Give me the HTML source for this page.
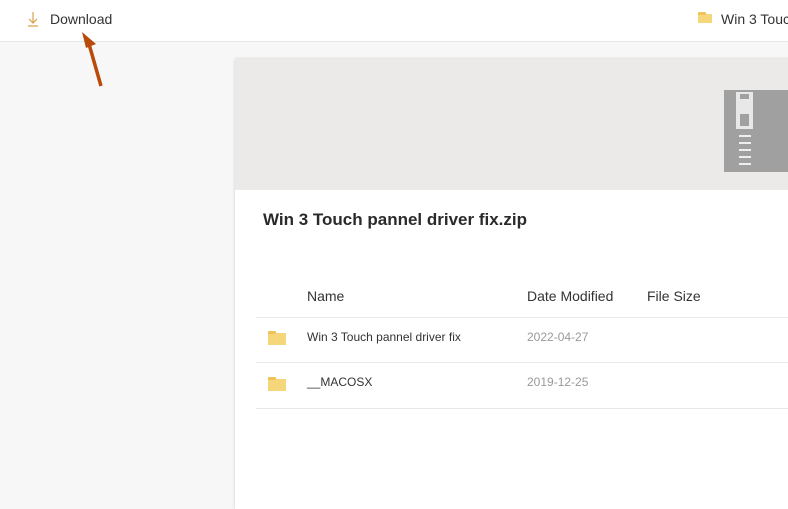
<!DOCTYPE html>
<html><head><style>
body{margin:0;width:788px;height:503px;overflow:hidden;background:#f8f7f7;font-family:"Liberation Sans",sans-serif;position:relative}
.top{position:absolute;left:0;top:0;width:788px;height:41px;background:#fff;border-bottom:1px solid #e6e6e6}
.card{position:absolute;left:235px;top:59px;width:560px;height:450px;background:#fff;box-shadow:0 0 3px rgba(0,0,0,.18)}
.hero{height:131px;background:#ebeae9}
.t{position:absolute;color:#333}
.row{position:absolute;left:21px;width:540px;border-top:1px solid #e8e8e8}
.fold{position:absolute;width:18px;height:12px;background:#f6d67a}
.fold:before{content:"";position:absolute;left:0;top:-2px;width:8px;height:3px;background:#efc35a;border-radius:1px 1px 0 0}
</style></head><body>
<div class="top">
<svg style="position:absolute;left:27px;top:11px" width="12" height="16"><path d="M6 1v11M2 8l4 4 4-4M1 15h10" stroke="#d8a24a" stroke-width="1.2" fill="none"/></svg>
<div class="t" style="left:50px;top:11px;font-size:14px">Download</div>
<div class="fold" style="left:698px;top:14px;width:14px;height:9px"></div>
<div class="t" style="left:721px;top:11px;font-size:14px;white-space:nowrap">Win 3 Touch</div>
</div>
<div class="card">
<div class="hero"><div style="position:absolute;left:489px;top:31px;width:80px;height:82px;background:#a0a0a0">
<div style="position:absolute;left:12px;top:2px;width:17px;height:37px;background:#e8e8e8"></div>
<div style="position:absolute;left:16px;top:4px;width:9px;height:5px;background:#a0a0a0"></div>
<div style="position:absolute;left:16px;top:24px;width:9px;height:12px;background:#a0a0a0"></div>
<div style="position:absolute;left:15px;top:45px;width:12px;height:31px;background:repeating-linear-gradient(#eee 0 2px,transparent 2px 7px)"></div>
</div></div>
<div class="t" style="left:28px;top:151px;font-size:17px;font-weight:bold;color:#2a2a2a">Win 3 Touch pannel driver fix.zip</div>
<div class="t" style="left:72px;top:229px;font-size:14px">Name</div>
<div class="t" style="left:292px;top:229px;font-size:14px">Date Modified</div>
<div class="t" style="left:412px;top:229px;font-size:14px">File Size</div>
<div class="row" style="top:258px"></div>
<div class="fold" style="left:33px;top:274px"></div>
<div class="t" style="left:72px;top:271px;font-size:12px">Win 3 Touch pannel driver fix</div>
<div class="t" style="left:292px;top:271px;font-size:12px;color:#999">2022-04-27</div>
<div class="row" style="top:303px"></div>
<div class="fold" style="left:33px;top:320px"></div>
<div class="t" style="left:72px;top:316px;font-size:12px">__MACOSX</div>
<div class="t" style="left:292px;top:316px;font-size:12px;color:#999">2019-12-25</div>
<div class="row" style="top:349px"></div>
</div>
<svg style="position:absolute;left:75px;top:26px" width="32" height="64"><path d="M26 60L14 18" stroke="#b84a0a" stroke-width="3.5"/><path d="M7 6l14 12-10 4z" fill="#b84a0a"/></svg>
</body></html>
